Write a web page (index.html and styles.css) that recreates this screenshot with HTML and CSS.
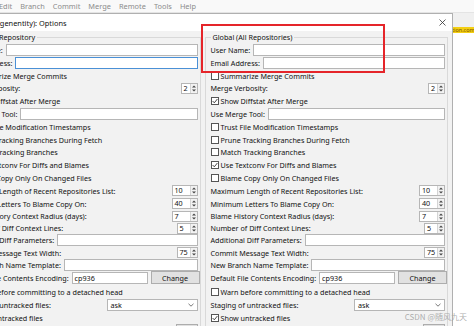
FILE: index.html
```html
<!DOCTYPE html>
<html lang="en">
<head>
    <meta charset="UTF-8">
    <title>Git Gui (genentity): Options</title>
    <link rel="stylesheet" href="styles.css">
</head>
<body>
    <div class="menubar">
        <span>Edit</span><span>Branch</span><span>Commit</span><span>Merge</span><span>Remote</span><span>Tools</span><span>Help</span>
    </div>
    <div class="toolband"></div>
    <div class="linkrow"><a>tion.com</a></div>

    <div class="dialog">
        <div class="titlebar">
            <span>Git Gui (genentity): Options</span>
            <span class="close">
                <svg width="7" height="7" viewBox="0 0 7 7"><path d="M0.5 0.5L6.5 6.5M6.5 0.5L0.5 6.5" stroke="#333" stroke-width="0.8"/></svg>
            </span>
        </div>
        <div class="panes">
            <fieldset class="group">
                <legend>genentity Repository</legend>
                <div class="row"><label>User Name:</label><span class="entry"></span></div>
                <div class="row"><label>Email Address:</label><span class="entry focus"></span></div>
                <div class="row"><span class="check"></span><label>Summarize Merge Commits</label></div>
                <div class="row"><label>Merge Verbosity:</label><span class="spin w17"><span class="val">2</span><span class="arrows"><svg width="6" height="9" viewBox="0 0 6 9"><path d="M1 3.6L3 1.6L5 3.6Z M1 5.4L3 7.4L5 5.4Z" fill="#444"/></svg></span></span></div>
                <div class="row"><span class="check"><svg width="6" height="6" viewBox="0 0 6 6"><path d="M0.6 3L2.3 4.8L5.4 1" fill="none" stroke="#333" stroke-width="0.9"/></svg></span><label>Show Diffstat After Merge</label></div>
                <div class="row"><label>Use Merge Tool:</label><span class="entry"></span></div>
                <div class="row"><span class="check"></span><label>Trust File Modification Timestamps</label></div>
                <div class="row"><span class="check"></span><label>Prune Tracking Branches During Fetch</label></div>
                <div class="row"><span class="check"></span><label>Match Tracking Branches</label></div>
                <div class="row"><span class="check"><svg width="6" height="6" viewBox="0 0 6 6"><path d="M0.6 3L2.3 4.8L5.4 1" fill="none" stroke="#333" stroke-width="0.9"/></svg></span><label>Use Textconv For Diffs and Blames</label></div>
                <div class="row"><span class="check"></span><label>Blame Copy Only On Changed Files</label></div>
                <div class="row"><label>Maximum Length of Recent Repositories List:</label><span class="spin w26"><span class="val">10</span><span class="arrows"><svg width="6" height="9" viewBox="0 0 6 9"><path d="M1 3.6L3 1.6L5 3.6Z M1 5.4L3 7.4L5 5.4Z" fill="#444"/></svg></span></span></div>
                <div class="row"><label>Minimum Letters To Blame Copy On:</label><span class="spin w26"><span class="val">40</span><span class="arrows"><svg width="6" height="9" viewBox="0 0 6 9"><path d="M1 3.6L3 1.6L5 3.6Z M1 5.4L3 7.4L5 5.4Z" fill="#444"/></svg></span></span></div>
                <div class="row tight"><label>Blame History Context Radius (days):</label><span class="spin w26"><span class="val">7</span><span class="arrows"><svg width="6" height="9" viewBox="0 0 6 9"><path d="M1 3.6L3 1.6L5 3.6Z M1 5.4L3 7.4L5 5.4Z" fill="#444"/></svg></span></span></div>
                <div class="row tight"><label>Number of Diff Context Lines:</label><span class="spin w21"><span class="val">5</span><span class="arrows"><svg width="6" height="9" viewBox="0 0 6 9"><path d="M1 3.6L3 1.6L5 3.6Z M1 5.4L3 7.4L5 5.4Z" fill="#444"/></svg></span></span></div>
                <div class="row tight"><label>Additional Diff Parameters:</label><span class="entry"></span></div>
                <div class="row tight"><label>Commit Message Text Width:</label><span class="spin w21"><span class="val">75</span><span class="arrows"><svg width="6" height="9" viewBox="0 0 6 9"><path d="M1 3.6L3 1.6L5 3.6Z M1 5.4L3 7.4L5 5.4Z" fill="#444"/></svg></span></span></div>
                <div class="row tight"><label>New Branch Name Template:</label><span class="entry"></span></div>
                <div class="row tall"><label>Default File Contents Encoding:</label><span class="entry text">cp936</span><span class="btn">Change</span></div>
                <div class="row tall"><span class="check"></span><label>Warn before committing to a detached head</label></div>
                <div class="row"><label>Staging of untracked files:</label><span class="combo"><span>ask</span><svg width="6" height="4" viewBox="0 0 6 4"><path d="M0.5 0.8L3 3.2L5.5 0.8" fill="none" stroke="#555" stroke-width="0.8"/></svg></span></div>
                <div class="row"><span class="check"><svg width="6" height="6" viewBox="0 0 6 6"><path d="M0.6 3L2.3 4.8L5.4 1" fill="none" stroke="#333" stroke-width="0.9"/></svg></span><label>Show untracked files</label></div>
                <div class="row last"><label>Tab spacing:</label><span class="btn small"></span></div>
            </fieldset>

            <fieldset class="group">
                <legend>Global (All Repositories)</legend>
                <div class="row"><label>User Name:</label><span class="entry"></span></div>
                <div class="row"><label>Email Address:</label><span class="entry"></span></div>
                <div class="row"><span class="check"></span><label>Summarize Merge Commits</label></div>
                <div class="row"><label>Merge Verbosity:</label><span class="spin w17"><span class="val">2</span><span class="arrows"><svg width="6" height="9" viewBox="0 0 6 9"><path d="M1 3.6L3 1.6L5 3.6Z M1 5.4L3 7.4L5 5.4Z" fill="#444"/></svg></span></span></div>
                <div class="row"><span class="check"><svg width="6" height="6" viewBox="0 0 6 6"><path d="M0.6 3L2.3 4.8L5.4 1" fill="none" stroke="#333" stroke-width="0.9"/></svg></span><label>Show Diffstat After Merge</label></div>
                <div class="row"><label>Use Merge Tool:</label><span class="entry"></span></div>
                <div class="row"><span class="check"></span><label>Trust File Modification Timestamps</label></div>
                <div class="row"><span class="check"></span><label>Prune Tracking Branches During Fetch</label></div>
                <div class="row"><span class="check"></span><label>Match Tracking Branches</label></div>
                <div class="row"><span class="check"><svg width="6" height="6" viewBox="0 0 6 6"><path d="M0.6 3L2.3 4.8L5.4 1" fill="none" stroke="#333" stroke-width="0.9"/></svg></span><label>Use Textconv For Diffs and Blames</label></div>
                <div class="row"><span class="check"></span><label>Blame Copy Only On Changed Files</label></div>
                <div class="row"><label>Maximum Length of Recent Repositories List:</label><span class="spin w26"><span class="val">10</span><span class="arrows"><svg width="6" height="9" viewBox="0 0 6 9"><path d="M1 3.6L3 1.6L5 3.6Z M1 5.4L3 7.4L5 5.4Z" fill="#444"/></svg></span></span></div>
                <div class="row"><label>Minimum Letters To Blame Copy On:</label><span class="spin w26"><span class="val">40</span><span class="arrows"><svg width="6" height="9" viewBox="0 0 6 9"><path d="M1 3.6L3 1.6L5 3.6Z M1 5.4L3 7.4L5 5.4Z" fill="#444"/></svg></span></span></div>
                <div class="row tight"><label>Blame History Context Radius (days):</label><span class="spin w26"><span class="val">7</span><span class="arrows"><svg width="6" height="9" viewBox="0 0 6 9"><path d="M1 3.6L3 1.6L5 3.6Z M1 5.4L3 7.4L5 5.4Z" fill="#444"/></svg></span></span></div>
                <div class="row tight"><label>Number of Diff Context Lines:</label><span class="spin w21"><span class="val">5</span><span class="arrows"><svg width="6" height="9" viewBox="0 0 6 9"><path d="M1 3.6L3 1.6L5 3.6Z M1 5.4L3 7.4L5 5.4Z" fill="#444"/></svg></span></span></div>
                <div class="row tight"><label>Additional Diff Parameters:</label><span class="entry"></span></div>
                <div class="row tight"><label>Commit Message Text Width:</label><span class="spin w21"><span class="val">75</span><span class="arrows"><svg width="6" height="9" viewBox="0 0 6 9"><path d="M1 3.6L3 1.6L5 3.6Z M1 5.4L3 7.4L5 5.4Z" fill="#444"/></svg></span></span></div>
                <div class="row tight"><label>New Branch Name Template:</label><span class="entry"></span></div>
                <div class="row tall"><label>Default File Contents Encoding:</label><span class="entry text">cp936</span><span class="btn">Change</span></div>
                <div class="row tall"><span class="check"></span><label>Warn before committing to a detached head</label></div>
                <div class="row"><label>Staging of untracked files:</label><span class="combo"><span>ask</span><svg width="6" height="4" viewBox="0 0 6 4"><path d="M0.5 0.8L3 3.2L5.5 0.8" fill="none" stroke="#555" stroke-width="0.8"/></svg></span></div>
                <div class="row"><span class="check"><svg width="6" height="6" viewBox="0 0 6 6"><path d="M0.6 3L2.3 4.8L5.4 1" fill="none" stroke="#333" stroke-width="0.9"/></svg></span><label>Show untracked files</label></div>
                <div class="row last"><label>Tab spacing:</label><span class="btn small"></span></div>
            </fieldset>
        </div>
    </div>

    <div class="mark"></div>
    <div class="watermark">CSDN @随风九天</div>
</body>
</html>
```

FILE: styles.css
```css
* {
    box-sizing: border-box;
}
body {
    margin: 0;
    width: 474px;
    height: 326px;
    overflow: hidden;
    position: relative;
    background: #fff;
    font-family: "Noto Sans", "Liberation Sans", sans-serif;
    font-size: 7.2px;
    color: #111;
}
.menubar {
    height: 13px;
    display: flex;
    align-items: center;
    gap: 8px;
    margin-left: -1px;
    background: #f9f9f9;
    border-bottom: 1px solid #e4e4e4;
    color: #8c8c8c;
    font-size: 7.4px;
}
.toolband {
    height: 14px;
    background: #f0f0f0;
}
.linkrow {
    height: 6px;
    display: flex;
    justify-content: flex-end;
}
.linkrow a {
    width: 24px;
    padding-left: 2px;
    background: #f4cf12;
    color: #7a5200;
    font-size: 5.5px;
    line-height: 6px;
    white-space: nowrap;
    overflow: hidden;
    text-decoration: underline;
}
.dialog {
    position: absolute;
    left: -48px;
    top: 13px;
    width: 501px;
    height: 330px;
    background: #f2f2f2;
    border: 1px solid #b0b0b0;
}
.titlebar {
    height: 17px;
    display: flex;
    align-items: center;
    padding-left: 19px;
    background: #fff;
    color: #111;
    font-size: 7.4px;
}
.close {
    margin-left: auto;
    width: 20px;
    display: flex;
    justify-content: center;
}
.panes {
    display: flex;
    gap: 4px;
    padding: 0 4px;
}
.group {
    flex: 1;
    min-width: 0;
    margin: 0;
    padding: 0.6px 2px 0 5px;
    border: 1px solid #d9d9d9;
    border-bottom: none;
}
.group legend {
    padding: 0 2px;
    line-height: 12px;
}
.row {
    display: flex;
    align-items: center;
    height: 12.8px;
    white-space: nowrap;
}
.row.tight {
    height: 12.2px;
}
.row.tall {
    height: 14px;
}
.row label {
    margin-right: 3px;
}
.entry {
    flex: 1;
    height: 12px;
    background: #fff;
    border: 1px solid #b6b6b6;
}
.entry.focus {
    border-color: #4a90d6;
}
.entry.text {
    padding-left: 2px;
    line-height: 10px;
}
.check {
    width: 8px;
    height: 8px;
    margin-right: 2px;
    display: flex;
    align-items: center;
    justify-content: center;
    background: #fff;
    border: 1px solid #555;
}
.spin {
    margin-left: auto;
    height: 11px;
    display: flex;
    background: #fff;
    border: 1px solid #b6b6b6;
}
.spin .val {
    flex: 1;
    padding-left: 2px;
    line-height: 9px;
}
.spin .arrows {
    width: 7px;
    display: flex;
    align-items: center;
    justify-content: center;
    background: #f2f2f2;
    border-left: 1px solid #d4d4d4;
}
.w17 {
    width: 17px;
}
.w21 {
    width: 21px;
}
.w26 {
    width: 26px;
}
.btn {
    width: 49px;
    height: 13px;
    margin-left: 3px;
    margin-right: -2px;
    display: flex;
    align-items: center;
    justify-content: center;
    background: #e1e1e1;
    border: 1px solid #adadad;
}
.btn.small {
    width: 22px;
    margin-left: auto;
    margin-right: 0;
}
.combo {
    margin-left: auto;
    width: 91px;
    height: 12px;
    display: flex;
    align-items: center;
    justify-content: space-between;
    padding: 0 3px 0 3px;
    background: #fff;
    border: 1px solid #b6b6b6;
}
.mark {
    position: absolute;
    left: 201px;
    top: 24px;
    width: 184px;
    height: 49px;
    border: 2px solid #e5252a;
}
.watermark {
    position: absolute;
    right: 7px;
    top: 311px;
    font-family: "Noto Sans CJK SC", sans-serif;
    font-size: 8px;
    line-height: 12px;
    color: rgba(165, 165, 165, 0.9);
}
```
